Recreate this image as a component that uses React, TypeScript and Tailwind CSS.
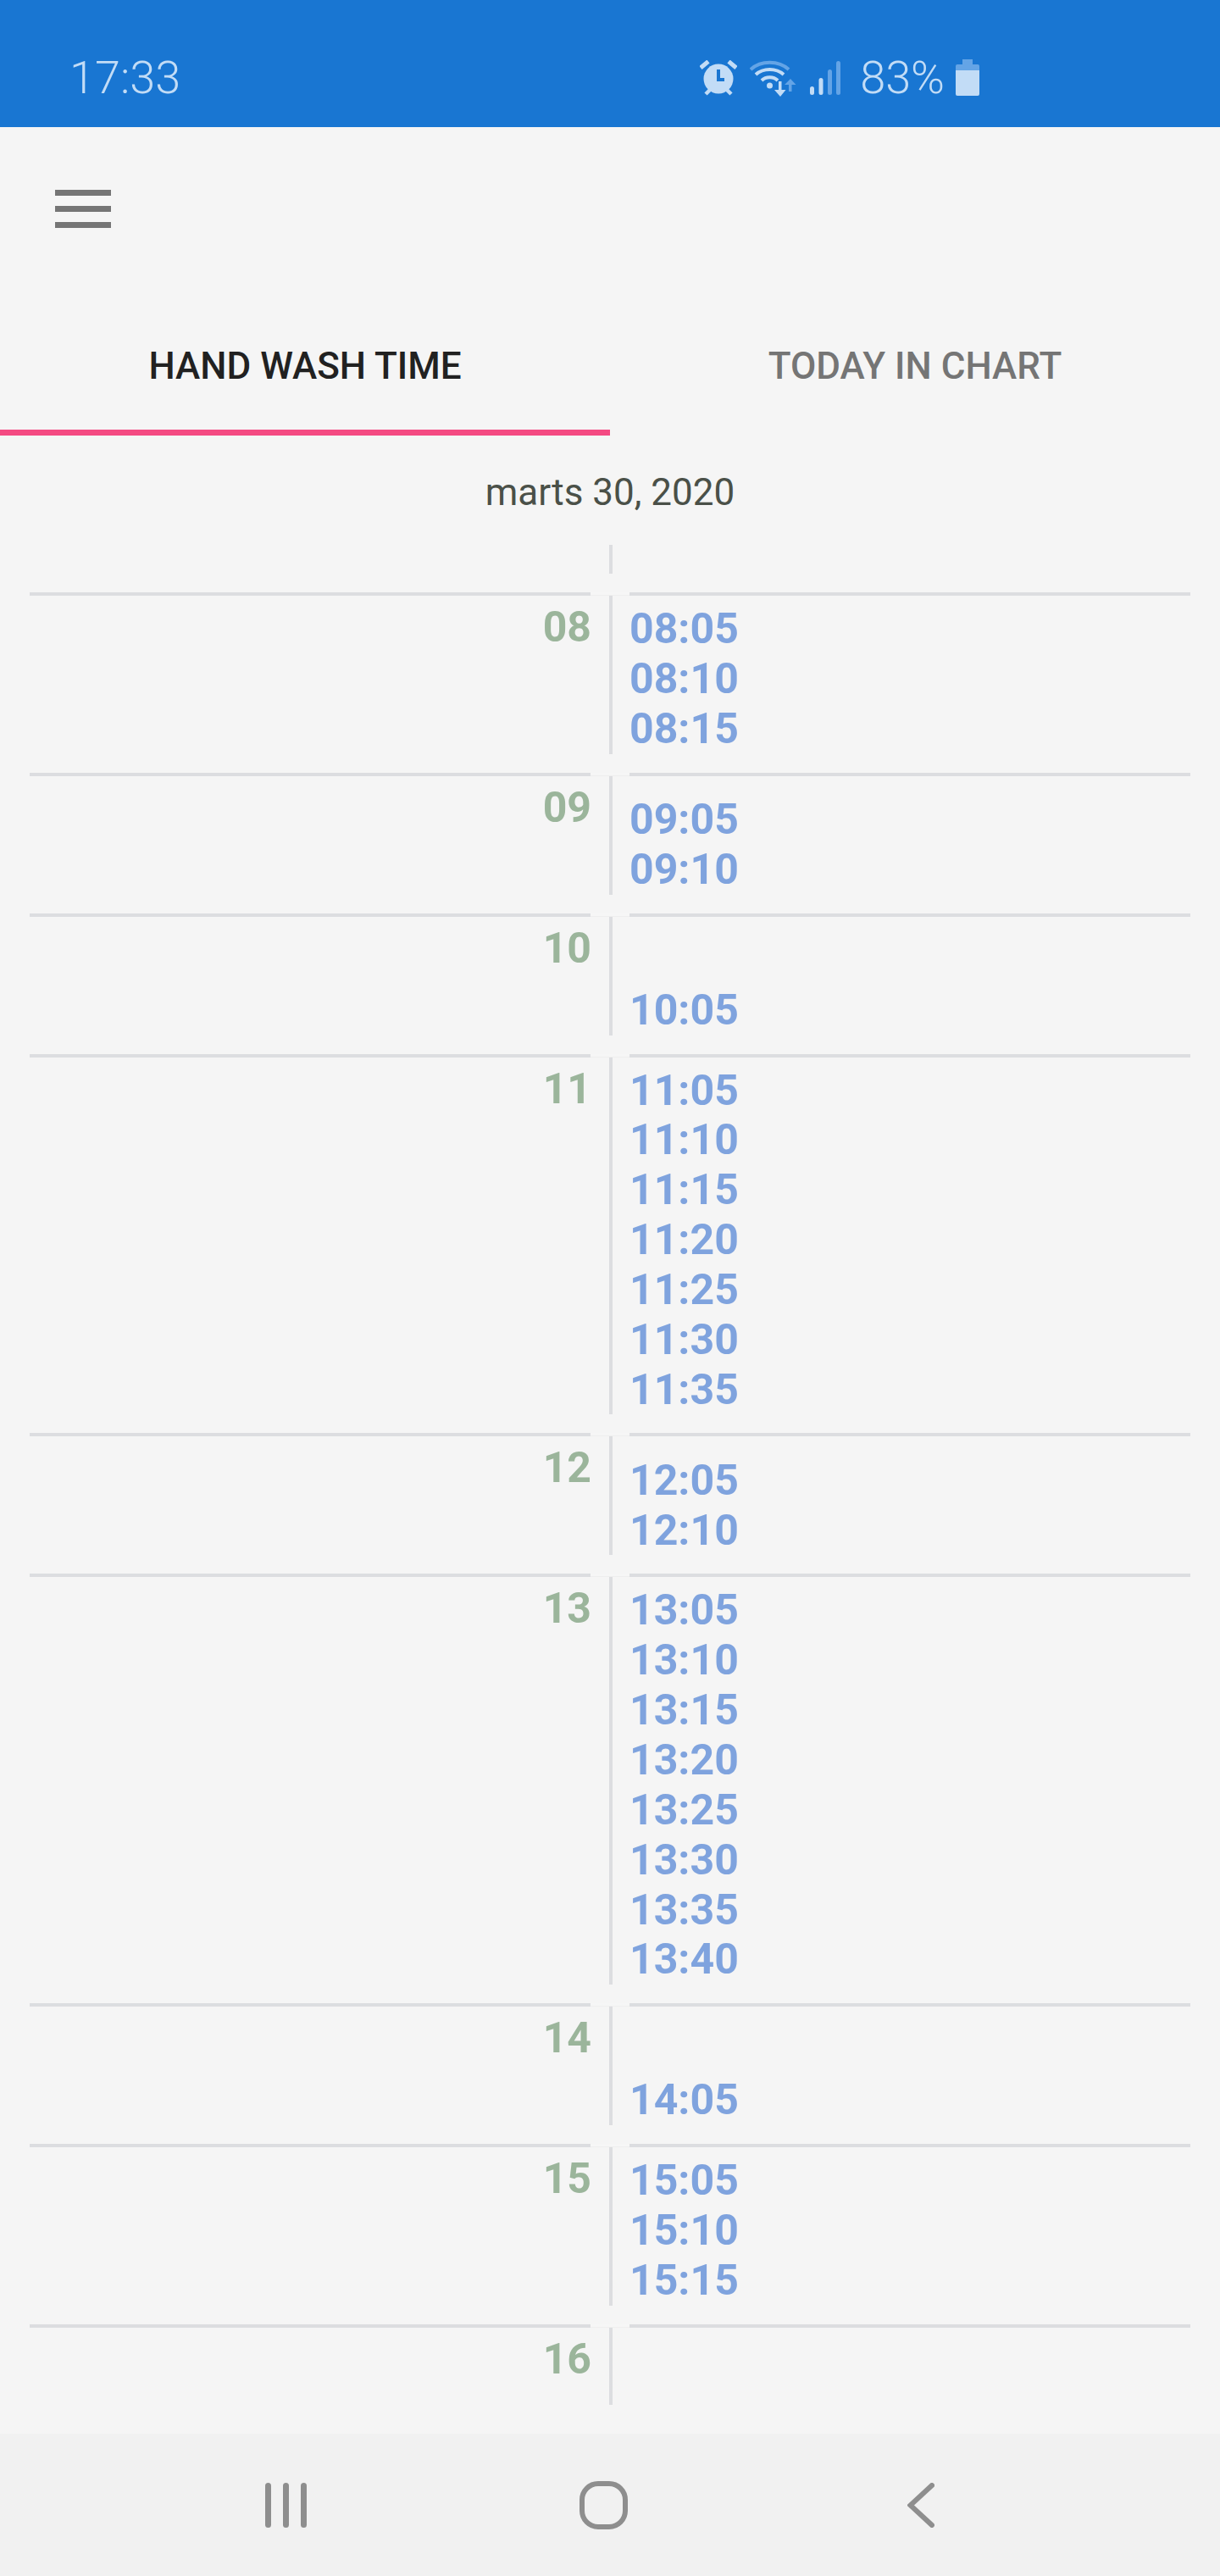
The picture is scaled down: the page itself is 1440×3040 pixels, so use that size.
import React from "react";

const HOURS: { hour: string; times: string[] }[] = [
  { hour: "08", times: ["08:05", "08:10", "08:15"] },
  { hour: "09", times: ["09:05", "09:10"] },
  { hour: "10", times: ["10:05"] },
  { hour: "11", times: ["11:05", "11:10", "11:15", "11:20", "11:25", "11:30", "11:35"] },
  { hour: "12", times: ["12:05", "12:10"] },
  { hour: "13", times: ["13:05", "13:10", "13:15", "13:20", "13:25", "13:30", "13:35", "13:40"] },
  { hour: "14", times: ["14:05"] },
  { hour: "15", times: ["15:05", "15:10", "15:15"] },
];

const AlarmIcon = () => (
  <svg width="44" height="42" viewBox="0 0 44 42" className="shrink-0">
    <circle cx="22" cy="22" r="17.5" fill="#c2dcf6" />
    <path d="M22 11v12h7" fill="none" stroke="#1976d2" strokeWidth="4" />
    <path d="M1 9 L10 1.5 M43 9 L34 1.5" stroke="#c2dcf6" strokeWidth="5" />
    <path d="M7 40 L12 35 M37 40 L32 35" stroke="#c2dcf6" strokeWidth="4.5" />
  </svg>
);

const WifiIcon = () => (
  <svg width="56" height="44" viewBox="0 0 56 44" className="shrink-0">
    <path d="M1 12 C13 1 34 1 46 12" fill="none" stroke="#64a4e6" strokeWidth="4" />
    <path d="M7 18 C16 10 31 10 40 18" fill="none" stroke="#c2dcf6" strokeWidth="4" />
    <path d="M14 25 C19 20 28 20 33 25" fill="none" stroke="#c2dcf6" strokeWidth="4" />
    <circle cx="23.5" cy="31" r="3.5" fill="#c2dcf6" />
    <path d="M34 26 h3.5 v10 h5 L36 44 L29 36 h5z" fill="#c2dcf6" />
    <path d="M46 38 h3.5 v-8 h5 L48 23 L41 30 h5z" fill="#64a4e6" />
  </svg>
);

const SignalIcon = () => (
  <svg width="36" height="40" viewBox="0 0 36 40" className="shrink-0">
    <rect x="0" y="30" width="5" height="10" rx="2.5" fill="#c2dcf6" />
    <rect x="10.500" y="20" width="5" height="20" rx="2.500" fill="#c2dcf6" />
    <rect x="21" y="10" width="5" height="30" rx="2.500" fill="#64a4e6" />
    <rect x="31" y="0" width="5" height="40" rx="2.500" fill="#64a4e6" />
  </svg>
);

const BatteryIcon = () => (
  <svg width="28" height="43" viewBox="0 0 28 43" className="shrink-0">
    <path d="M8 0 h12 v6 h6 a2 2 0 0 1 2 2 v6 H0 V8 a2 2 0 0 1 2-2 h6z" fill="#64a4e6" />
    <path d="M0 13 h28 v28 a2 2 0 0 1-2 2 H2 a2 2 0 0 1-2-2z" fill="#c2dcf6" />
  </svg>
);

const Rule = () => (
  <div className="flex h-[4px]">
    <div className="flex-1 bg-[#dcdde0]" />
    <div className="w-[46px] border-b border-[#eeeeee] bg-[#f6f6f6]" />
    <div className="flex-1 bg-[#dcdde0]" />
  </div>
);

const HourRow: React.FC<{ hour: string; times: string[] }> = ({ hour, times }) => (
  <div className="pb-[22px]">
    <Rule />
    <div className="flex min-h-[140px]">
      <div className="w-[684px] shrink-0 pt-[8px] pr-[21px] text-right text-[50px] leading-[59px] font-bold text-[#9bb59b]">
        {hour}
      </div>
      <div className="w-[4px] bg-[#dcdde0]" />
      <div className="flex flex-1 flex-col justify-end pt-[10px] pl-[20px] text-[50px] leading-[58.85px] font-bold text-[#7fa3de]">
        {times.map((time) => (
          <div key={time}>{time}</div>
        ))}
      </div>
    </div>
  </div>
);

export default function App() {
  return (
    <div className="flex h-[3040px] w-[1440px] flex-col overflow-hidden bg-[#f5f5f5] font-[Roboto,sans-serif]">
      {/* Status bar */}
      <div className="flex h-[150px] shrink-0 items-center justify-between bg-[#1976d2] pt-[33px] pr-[284px] pl-[82px] text-[54px] font-light text-[#c2dcf6]">
        <span>17:33</span>
        <div className="flex items-center gap-[15px]">
          <AlarmIcon />
          <WifiIcon />
          <SignalIcon />
          <span className="ml-[8px]">83%</span>
          <div className="-ml-[2px]">
            <BatteryIcon />
          </div>
        </div>
      </div>

      {/* Toolbar */}
      <div className="flex h-[193px] shrink-0 items-center pl-[65px]">
        <div className="flex w-[66px] flex-col gap-[12px]">
          <div className="h-[7px] bg-[#757575]" />
          <div className="h-[7px] bg-[#757575]" />
          <div className="h-[7px] bg-[#757575]" />
        </div>
      </div>

      {/* Tabs */}
      <div className="flex h-[171px] shrink-0 text-[44px] font-medium">
        <div className="flex w-[720px] items-center justify-center border-b-[7px] border-[#f44a82] pt-[14px] text-[#212121]">
          HAND WASH TIME
        </div>
        <div className="flex w-[720px] items-center justify-center pt-[14px] pb-[7px] text-[#757575]">
          TODAY IN CHART
        </div>
      </div>

      {/* Date */}
      <div className="flex h-[129px] shrink-0 items-start justify-center pt-[42px] text-[44px] leading-[50px] text-[#4a5048]">
        marts 30, 2020
      </div>

      {/* Timeline */}
      <div className="px-[35px]">
        <div className="flex h-[34px] justify-center">
          <div className="ml-[2px] w-[4px] bg-[#dcdde0]" />
        </div>
        <div className="h-[22px]" />
        {HOURS.map((row) => (
          <HourRow key={row.hour} hour={row.hour} times={row.times} />
        ))}
        <Rule />
        <div className="flex h-[91px]">
          <div className="w-[684px] shrink-0 pt-[8px] pr-[21px] text-right text-[50px] leading-[59px] font-bold text-[#9bb59b]">
            16
          </div>
          <div className="w-[4px] bg-[#dcdde0]" />
        </div>
      </div>

      {/* Navigation bar */}
      <div className="mt-auto flex h-[168px] shrink-0 items-center bg-[#f1f1f1]">
        <div className="ml-[313px] flex gap-[14px]">
          <div className="h-[53px] w-[7px] rounded-full bg-[#8e8e8e]" />
          <div className="h-[53px] w-[7px] rounded-full bg-[#8e8e8e]" />
          <div className="h-[53px] w-[7px] rounded-full bg-[#8e8e8e]" />
        </div>
        <div className="ml-[322px] h-[57px] w-[57px] rounded-[22px] border-[6px] border-[#8e8e8e]" />
        <svg width="32" height="53" viewBox="0 0 32 53" className="ml-[330px]">
          <path d="M29 3 L3.500 26.500 L29 50" fill="none" stroke="#8e8e8e" strokeWidth="6" strokeLinecap="round" />
        </svg>
      </div>
    </div>
  );
}
